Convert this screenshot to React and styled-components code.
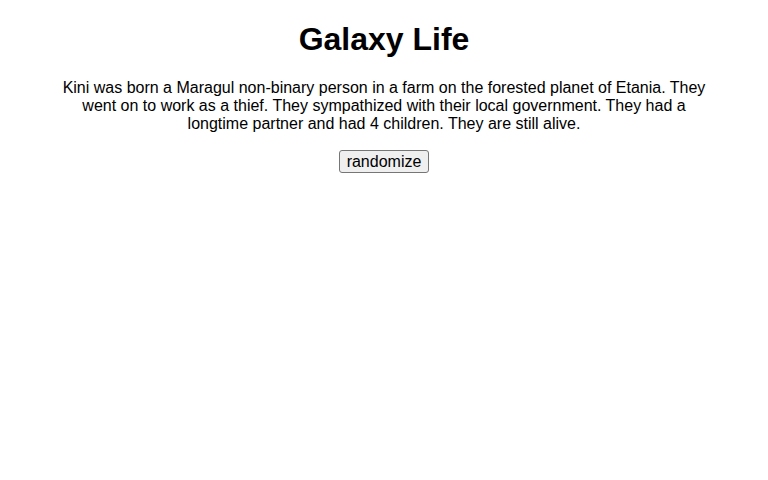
import React, { useState } from "react";
import styled, { createGlobalStyle } from "styled-components";

const GlobalStyle = createGlobalStyle`
  html, body {
    margin: 0;
    background: #ffffff;
  }
  body {
    font-family: "Liberation Sans", Arial, sans-serif;
    color: #000000;
  }
`;

const Page = styled.main`
  display: flex;
  flex-direction: column;
  align-items: center;
  text-align: center;
  padding: 0 8px;
`;

const Title = styled.h1`
  font-size: 32px;
  font-weight: bold;
  margin: 21px 0 21px;
  line-height: 37px;
`;

const Story = styled.p`
  max-width: 652px;
  font-size: 16px;
  line-height: 18px;
  margin: 0 0 17px;
`;

const Button = styled.button`
  font-family: "Liberation Sans", Arial, sans-serif;
  font-size: 16px;
  line-height: 19px;
  padding: 1px 7px;
  color: #000000;
  background: #efefef;
  border: 1px solid #767676;
  border-radius: 3px;
  cursor: pointer;
`;

const story =
  "Kini was born a Maragul non-binary person in a farm on the forested planet of Etania. They went on to work as a thief. They sympathized with their local government. They had a longtime partner and had 4 children. They are still alive.";

export default function App() {
  const [text] = useState(story);
  return (
    <>
      <GlobalStyle />
      <Page>
        <Title>Galaxy Life</Title>
        <Story>{text}</Story>
        <Button type="button">randomize</Button>
      </Page>
    </>
  );
}
